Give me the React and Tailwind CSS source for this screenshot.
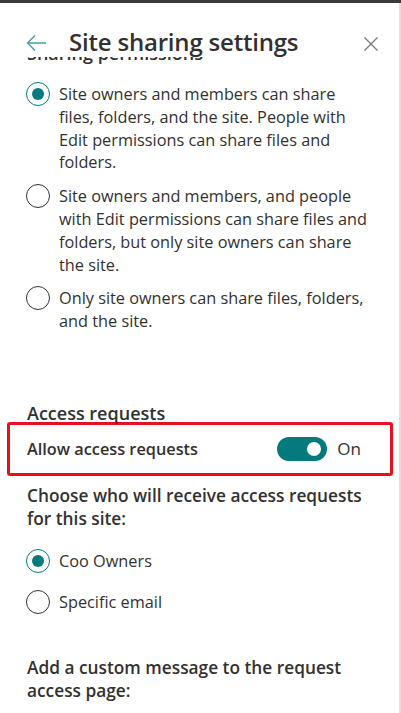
import React from "react";

const teal = "#047a7c";

const Radio = ({ checked }) => (
  <span
    className={`mt-[-1px] flex h-[24px] w-[24px] shrink-0 items-center justify-center rounded-full border-[1.5px] ${
      checked ? "border-[#047a7c]" : "border-[#323130]"
    }`}
  >
    {checked && <span className="h-[12px] w-[12px] rounded-full bg-[#047a7c]" />}
  </span>
);

const Option = ({ checked, children }) => (
  <div className="flex items-start gap-[9px]">
    <Radio checked={checked} />
    <div className="w-[312px] text-[16.3px] leading-[22.8px]">{children}</div>
  </div>
);

export default function App() {
  return (
    <div
      className="relative flex h-[713px] w-[401px] flex-col overflow-hidden bg-white text-[#323130]"
      style={{ fontFamily: '"Open Sans", "Noto Sans", sans-serif' }}
    >
      <div className="h-[3px] shrink-0 bg-[#3b3a39]" />
      <div className="flex flex-1 border-r-2 border-[#e1dfdd]">
        <div className="flex-1">
          {/* header */}
          <div className="flex h-[54px] items-start pl-[26px] pr-[20px] pt-[24px]">
            <svg width="21" height="18" viewBox="0 0 21 18" className="mt-[7px] shrink-0" fill="none" stroke="#4b9ea0" strokeWidth="1.4">
              <path d="M20 9H1.5M9 1.5 1.5 9 9 16.5" />
            </svg>
            <h1 className="ml-[22px] flex-1 text-[24px] leading-[30px] font-semibold tracking-[-0.2px] text-[#323130]">
              Site sharing settings
            </h1>
            <svg width="16" height="16" viewBox="0 0 16 16" className="mt-[9px]" fill="none" stroke="#7a7876" strokeWidth="1.3">
              <path d="M1.5 1.5l13 13M14.5 1.5l-13 13" />
            </svg>
          </div>

          {/* heading scrolled under the header */}
          <div className="h-[7px] overflow-hidden pl-[27px]">
            <div className="-mt-[16px] text-[18px] leading-[24px] font-semibold">Sharing permissions</div>
          </div>

          <div className="mt-[19px] flex flex-col gap-[11px] pl-[26px]">
            <Option checked>
              Site owners and members can share files, folders, and the site. People with Edit permissions can share files and folders.
            </Option>
            <Option>
              Site owners and members, and people with Edit permissions can share files and folders, but only site owners can share the site.
            </Option>
            <Option>Only site owners can share files, folders, and the site.</Option>
          </div>

          <div className="mt-[71px] pl-[27px] text-[18px] leading-[18px] font-semibold">Access requests</div>

          <div className="ml-[7px] mr-[6px] flex h-[54px] items-center rounded-[3px] border-[3.5px] border-[#e8101f] pl-[17px] pr-[29px]">
            <span className="flex-1 text-[16.3px] font-semibold">Allow access requests</span>
            <span className="flex h-[24px] w-[50px] items-center justify-end rounded-full pr-[6px]" style={{ background: teal }}>
              <span className="h-[14px] w-[14px] rounded-full bg-white" />
            </span>
            <span className="ml-[10px] text-[17px]">On</span>
          </div>

          <div className="mt-[8px] pl-[27px] pr-[30px] text-[17.3px] leading-[23px] font-semibold">
            Choose who will receive access requests for this site:
          </div>

          <div className="mt-[20px] flex flex-col gap-[18px] pl-[26px]">
            <Option checked>Coo Owners</Option>
            <Option>Specific email</Option>
          </div>

          <div className="mt-[42px] pl-[27px] pr-[30px] text-[17.3px] leading-[23px] font-semibold">
            Add a custom message to the request access page:
          </div>
        </div>
      </div>
    </div>
  );
}
